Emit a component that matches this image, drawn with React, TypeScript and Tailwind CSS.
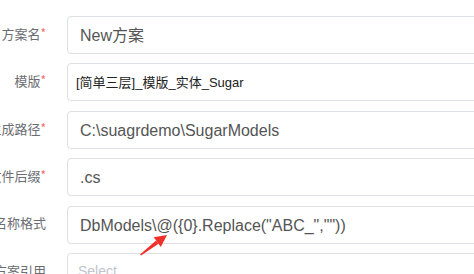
import React from 'react';

type Row = {
  label: string;
  required?: boolean;
  value?: string;
  placeholder?: string;
  small?: boolean;
};

const rows: Row[] = [
  { label: '方案名', required: true, value: 'New方案' },
  { label: '模版', required: true, value: '[简单三层]_模版_实体_Sugar', small: true },
  { label: '生成路径', required: true, value: 'C:\\suagrdemo\\SugarModels' },
  { label: '文件后缀', required: true, value: '.cs' },
  { label: '类名称格式', value: 'DbModels\\@({0}.Replace("ABC_",""))' },
  { label: '方案引用', placeholder: 'Select' },
];

function Arrow() {
  // red annotation arrow pointing at the "@"
  return (
    <svg className="absolute left-[136px] top-[230px]" width="36" height="30" viewBox="136 230 36 30">
      <polygon points="140,254.4 156.1,240.5 158.5,243.7 141,255.6" fill="#f0302a" />
      <polygon points="167,235 160.8,246.9 153.8,237.3" fill="#f0302a" />
    </svg>
  );
}

export default function App() {
  return (
    <div className="relative w-[474px] h-[274px] overflow-hidden bg-white">
      <div className="flex flex-col gap-[9.4px] pt-[16px]">
        {rows.map((r) => (
          <div key={r.label} className="flex items-center h-[38px]">
            <div className="w-[46px] shrink-0 flex justify-end -mt-[3px]">
              <span className="whitespace-nowrap text-[13px] text-[#6b6d72] font-['Noto_Sans_CJK_SC',sans-serif]">
                {r.label}
                {r.required && <span className="text-[#f56c6c] text-[12px] relative -top-[1px]">*</span>}
              </span>
            </div>
            <div className="ml-[21px] w-[480px] shrink-0 h-[38px] flex items-center rounded-[4px] border border-[#dcdfe6] bg-white">
              {r.value ? (
                r.small ? (
                  <span className="pl-[8px] whitespace-nowrap text-[13px] text-[#222] font-['Liberation_Sans','Noto_Sans_CJK_SC',sans-serif]">
                    {r.value}
                  </span>
                ) : (
                  <span className="pl-[12px] pt-[2px] whitespace-nowrap text-[16px] text-[#555] font-['Liberation_Sans','Noto_Sans_CJK_SC',sans-serif]">
                    {r.value}
                  </span>
                )
              ) : (
                <span className="pl-[10px] whitespace-nowrap text-[14px] text-[#c0c4cc] font-['Liberation_Sans',sans-serif]">
                  {r.placeholder}
                </span>
              )}
            </div>
          </div>
        ))}
      </div>
      <Arrow />
    </div>
  );
}
